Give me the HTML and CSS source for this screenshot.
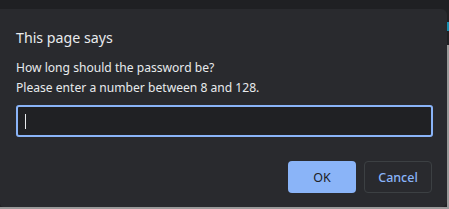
FILE: index.html
```html
<!DOCTYPE html>
<html lang="en">
<head>
    <meta charset="UTF-8">
    <title>This page says</title>
    <link rel="stylesheet" href="styles.css">
</head>
<body>
    <div class="page">
        <div class="topbar"></div>
        <div class="middle">
            <!-- Prompt dialog -->
            <div class="dialog">
                <h1 class="title">This page says</h1>
                <p class="message">How long should the password be?<br>Please enter a number between 8 and 128.</p>
                <div class="field"><span class="caret"></span></div>
                <div class="button-row">
                    <button class="btn btn-ok">OK</button>
                    <button class="btn btn-cancel">Cancel</button>
                </div>
            </div>
            <div class="side">
                <div class="side-accent"></div>
                <div class="side-grey"></div>
            </div>
        </div>
        <div class="bottombar"></div>
    </div>
</body>
</html>
```

FILE: styles.css
```css
body {
    margin: 0;
    padding: 0;
    background: #202124;
    font-family: 'Noto Sans', 'Open Sans', sans-serif;
    color: #e8eaed;
    overflow: hidden;
}

.page {
    width: 449px;
    height: 209px;
    display: flex;
    flex-direction: column;
}

.topbar {
    height: 9px;
    background: #1f2023;
}

.middle {
    display: flex;
    flex: 1;
}

.dialog {
    width: 447px;
    box-sizing: border-box;
    padding: 18px 16px 0 16px;
    background: #292a2e;
    border-radius: 0 6px 6px 4px;
    display: flex;
    flex-direction: column;
}

.title {
    margin: 0;
    font-size: 14.2px;
    font-weight: normal;
    line-height: 22px;
}

.message {
    margin: 9px 0 0 0;
    font-size: 12.1px;
    line-height: 20px;
}

.field {
    margin-top: 7px;
    width: 417px;
    height: 32px;
    box-sizing: border-box;
    border: 2px solid #8ab4f8;
    border-radius: 3px;
    background: #202124;
    display: flex;
    align-items: center;
    padding-left: 7px;
}

.caret {
    width: 1px;
    height: 15px;
    background: #e8eaed;
}

.button-row {
    display: flex;
    justify-content: flex-end;
    gap: 8px;
    margin-top: 24px;
    padding-right: 15px;
    margin-right: -16px;
}

.btn {
    width: 68px;
    height: 32px;
    border-radius: 4px;
    font-family: 'Noto Sans', 'Open Sans', sans-serif;
    font-size: 12.5px;
    padding: 0;
    cursor: pointer;
}

.btn-ok {
    background: #8ab4f8;
    color: #202124;
    border: none;
}

.btn-cancel {
    background: transparent;
    color: #8ab4f8;
    border: 1px solid #3c4043;
    font-weight: 500;
}

.side {
    width: 2px;
    display: flex;
    flex-direction: column;
}

.side-accent {
    margin-top: 13px;
    height: 9px;
    background: #1a8fb0;
}

.side-grey {
    margin-top: 14px;
    flex: 1;
    background: #9a9a9a;
}

.bottombar {
    height: 2px;
    background: #9a9a9a;
}
```
